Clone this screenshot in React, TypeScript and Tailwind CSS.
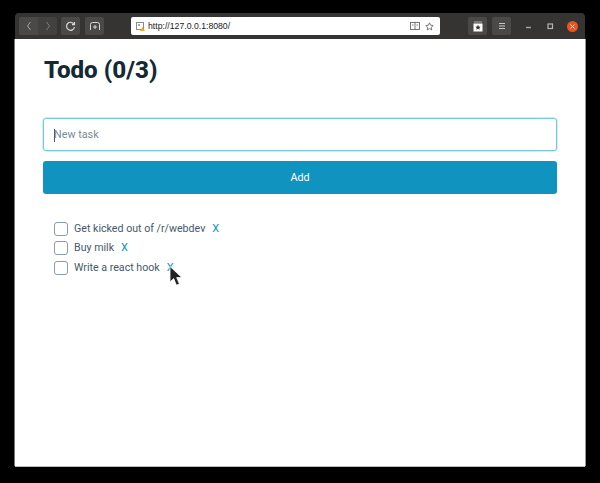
import React from "react";

const Tb = ({ children, className = "" }: { children?: React.ReactNode; className?: string }) => (
  <div className={`h-[18px] w-[19px] flex items-center justify-center bg-[#4a4947] rounded-[2px] shrink-0 ${className}`}>{children}</div>
);

const Item = ({ text }: { text: string }) => (
  <li className="flex items-center h-[19.5px]">
    <span className="w-[14px] h-[14px] border border-[#8c9ba5] rounded-[3px] bg-white shrink-0" />
    <span className="ml-[6px] text-[10.65px] text-[#46596a]">{text}</span>
    <span className="ml-[7px] text-[11px] text-[#1193c0]">X</span>
  </li>
);

export default function App() {
  return (
    <div className="relative w-[600px] h-[483px] bg-black pt-[13px] px-[15px] overflow-hidden font-['Roboto',sans-serif]">
      <div className="w-[570px] h-[453px] flex flex-col">
        <div className="h-[26px] bg-[#353432] rounded-t-[4px] flex items-center pl-[4px] shrink-0">
          <div className="flex">
            <Tb className="rounded-r-none">
              <svg width="8" height="10" viewBox="0 0 8 10" fill="none" stroke="#a8a7a4" strokeWidth="1"><path d="M5.5 1 2.5 5l3 4" /></svg>
            </Tb>
            <Tb className="rounded-l-none bg-[#424140]">
              <svg width="8" height="10" viewBox="0 0 8 10" fill="none" stroke="#7d7c79" strokeWidth="1"><path d="M2.5 1l3 4-3 4" /></svg>
            </Tb>
          </div>
          <Tb className="ml-[4px]">
            <svg width="11" height="11" viewBox="0 0 11 11" fill="none" stroke="#d8d7d4" strokeWidth="1.2"><path d="M9 3.2A4 4 0 1 0 9.5 6" /><path d="M9.5 1v2.6H7" /></svg>
          </Tb>
          <Tb className="ml-[5px]">
            <svg width="12" height="10" viewBox="0 0 12 10" fill="none" stroke="#d8d7d4" strokeWidth="1"><path d="M1.5 9V3.5A2 2 0 0 1 3.5 1.5h5a2 2 0 0 1 2 2V9" /><path d="M6 4v4M4 6h4" /></svg>
          </Tb>
          <div className="ml-[27px] w-[309px] h-[18px] bg-white rounded-[2px] flex items-center pl-[5px] pr-[6px] shrink-0">
            <svg width="9" height="9" viewBox="0 0 9 9" className="shrink-0">
              <rect x="0.5" y="0.5" width="7" height="7" fill="#fff" stroke="#8a8a8a" />
              <rect x="2" y="2" width="2" height="2" fill="#aaa" />
              <path d="M6.5 5 9 9H4z" fill="#f5a623" />
            </svg>
            <span className="ml-[3px] text-[8.7px] text-[#222] leading-none font-['Liberation_Sans',sans-serif]">http://127.0.0.1:8080/</span>
            <div className="ml-auto flex items-center gap-[5px]">
              <svg width="10" height="9" viewBox="0 0 10 9" fill="none" stroke="#6a6a6a" strokeWidth="0.9"><rect x="0.5" y="0.5" width="9" height="7" /><path d="M5 .5v7M2 3h1.5M6.5 3H8" /></svg>
              <svg width="9" height="9" viewBox="0 0 9 9" fill="none" stroke="#6a6a6a" strokeWidth="0.9"><path d="M4.5.8l1.1 2.4 2.6.3-1.9 1.8.5 2.6-2.3-1.3-2.3 1.3.5-2.6L.8 3.5l2.6-.3z" /></svg>
            </div>
          </div>
          <Tb className="ml-[28px]">
            <svg width="10" height="11" viewBox="0 0 10 11">
              <rect x="1" y="0.5" width="8" height="1" fill="#aaa" />
              <rect x="0.5" y="2.5" width="9" height="8" fill="#fff" />
              <path d="M5 3.8l.8 1.7 1.8.2-1.3 1.2.4 1.8L5 7.8l-1.7.9.4-1.8-1.3-1.2 1.8-.2z" fill="#333" />
            </svg>
          </Tb>
          <Tb className="ml-[5px]">
            <svg width="8" height="8" viewBox="0 0 8 8" stroke="#c8c7c4" strokeWidth="1"><path d="M1 1.5h6M1 4h6M1 6.5h6" /></svg>
          </Tb>
          <svg width="5" height="3" viewBox="0 0 5 3" className="ml-[15px] mt-[3px] shrink-0"><path d="M0 1.5h5" stroke="#a8a7a4" strokeWidth="1.4" /></svg>
          <svg width="7" height="7" viewBox="0 0 7 7" className="ml-[16px] shrink-0" fill="none" stroke="#b5b4b1" strokeWidth="1.2"><rect x="1" y="1" width="4.5" height="4.5" /></svg>
          <div className="ml-[13px] w-[11px] h-[11px] rounded-full bg-[#e95420] flex items-center justify-center shrink-0">
            <svg width="5" height="5" viewBox="0 0 5 5" stroke="#fff" strokeWidth="0.9"><path d="M.5.5l4 4M4.5.5l-4 4" /></svg>
          </div>
        </div>
        <div className="flex-1 bg-white px-[28px] flex flex-col shadow-[-1px_0_0_#777,1px_0_0_#999,0_1px_0_#bbb]">
          <h1 className="mt-[15px] ml-px text-[24.2px] leading-[32px] font-extrabold text-[#152935]">Todo (0/3)</h1>
          <div className="mt-[32px] h-[33px] border border-[#75c7e3] rounded-[3px] shadow-[0_0_0_0.5px_#a8dced] flex items-center pl-[10px] pt-[1px] text-[10.8px] text-[#7b8a94]">
            <span className="w-px h-[13px] bg-[#555] mr-[-1px]" />New task
          </div>
          <div className="mt-[10px] h-[33px] bg-[#1193c0] rounded-[3px] flex items-center justify-center pt-[1px] text-[10.8px] text-white">Add</div>
          <ul className="mt-[25px] ml-[11px]">
            <Item text="Get kicked out of /r/webdev" />
            <Item text="Buy milk" />
            <Item text="Write a react hook" />
          </ul>
        </div>
      </div>
      <svg width="14" height="22" viewBox="0 0 14 22" className="absolute left-[169px] top-[265px]">
        <path d="M1 1.5v15.5l3.7-3.4 2.7 6.6 3-1.3-2.7-6.3h5.2z" fill="#222" stroke="#fff" strokeWidth="0.8" />
      </svg>
    </div>
  );
}
